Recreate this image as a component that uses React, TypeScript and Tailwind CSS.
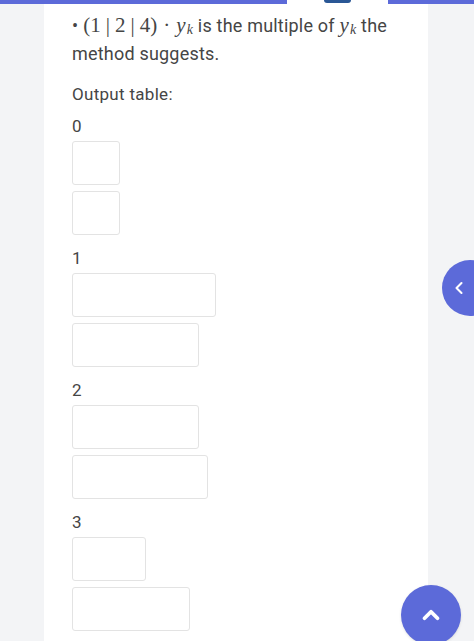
import { ChevronLeft, ChevronUp } from "lucide-react";

const groups = [
  { label: "0", widths: ["w-[48px]", "w-[48px]"] },
  { label: "1", widths: ["w-[144px]", "w-[127px]"] },
  { label: "2", widths: ["w-[127px]", "w-[136px]"] },
  { label: "3", widths: ["w-[74px]", "w-[118px]"] },
];

const Yk = () => (
  <span className="font-['Liberation_Serif',serif] italic text-[21px]">
    y<sub className="text-[14px] relative top-[2px] ml-[1px]">k</sub>
  </span>
);

export default function App() {
  return (
    <div className="relative w-[474px] h-[641px] overflow-hidden bg-[#f3f4f6] font-['Roboto',sans-serif] text-[#454545]">
      {/* верхняя полоса */}
      <div className="flex h-[4px] w-full">
        <div className="w-[287px] bg-[#5c6ad9]" />
        <div className="w-[101px] bg-white flex justify-center">
          <div className="w-[27px] h-[3px] rounded-b-full bg-[#2a5795]" />
        </div>
        <div className="flex-1 bg-[#5c6ad9]" />
      </div>

      <div className="flex h-[637px]">
        <div className="w-[44px] shrink-0" />
        <div className="w-[384px] shrink-0 bg-white pl-[28px] pr-[30px] pt-[7px]">
          <p className="text-[18px] leading-[28px] tracking-[0.2px]">
            <span className="mr-[5px]">•</span>
            <span className="font-['Liberation_Serif',serif] text-[21px] tracking-normal">
              (1<span className="mx-[5px]">|</span>2<span className="mx-[5px]">|</span>4)
              <span className="mx-[6px]">·</span>
            </span>
            <Yk /> is the multiple of <Yk /> the method suggests.
          </p>
          <p className="mt-[12px] text-[17px] leading-[28px] tracking-[0.3px]">Output table:</p>

          <div className="mt-[6px] flex flex-col">
            {groups.map((g, i) => (
              <div key={g.label} className={i === 0 ? "" : "mt-[11px]"}>
                <div className="h-[24px] mb-[3px] text-[17px] leading-[24px]">{g.label}</div>
                <div className="flex flex-col gap-[6px]">
                  {g.widths.map((w, j) => (
                    <div key={j} className={`${w} h-[44px] rounded-[3px] border border-[#e3e3e3] bg-white`} />
                  ))}
                </div>
              </div>
            ))}
          </div>
        </div>
        <div className="flex-1" />
      </div>

      {/* боковая кнопка */}
      <button className="absolute left-[442px] top-[260px] w-[56px] h-[56px] rounded-full bg-[#5c6ad9] flex items-center pl-[7px] text-white">
        <ChevronLeft size={20} strokeWidth={2.5} />
      </button>

      {/* наверх */}
      <button className="absolute left-[401px] top-[585px] w-[60px] h-[60px] rounded-full bg-[#5c6ad9] flex items-center justify-center text-white shadow-sm">
        <ChevronUp size={26} strokeWidth={3.5} />
      </button>
    </div>
  );
}
